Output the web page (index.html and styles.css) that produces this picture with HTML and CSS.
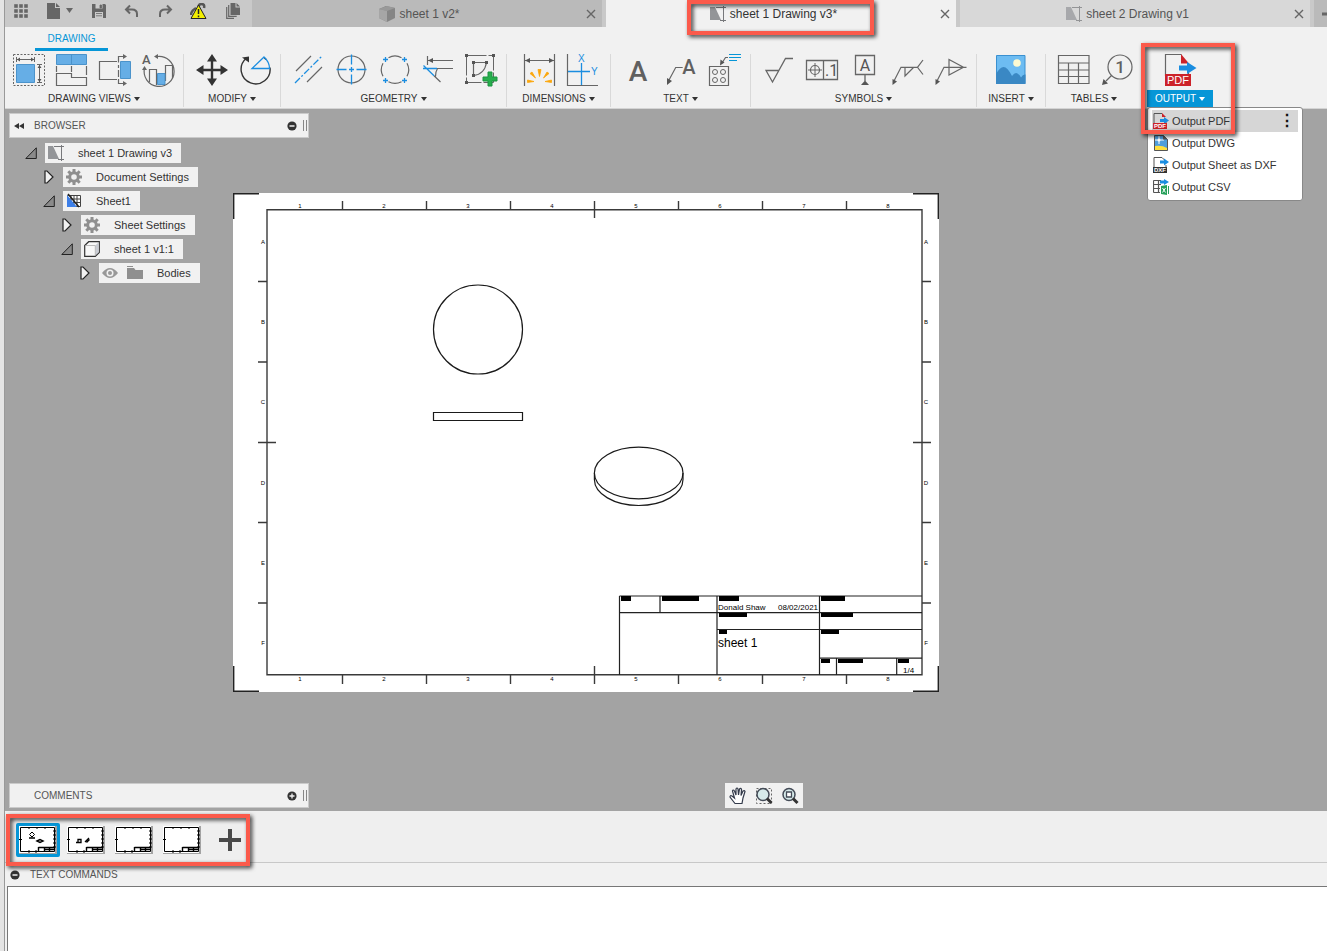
FILE: index.html
```html
<!DOCTYPE html>
<html lang="en">
<head>
    <meta charset="UTF-8">
    <meta name="viewport" content="width=device-width, initial-scale=1.0">
    <title>sheet 1 Drawing v3*</title>
    <link rel="stylesheet" href="styles.css">
</head>
<body>
    <!-- Shared icons -->
    <svg class="defs" aria-hidden="true">
        <symbol id="i-drawing" viewBox="0 0 16 16">
            <path d="M0 1h5l6 13H0z" fill="#939598"/>
            <path d="M6 1.500h10M13.500 0v16M10 14.500h6" fill="none" stroke="#77787b"/>
        </symbol>
        <symbol id="i-close" viewBox="0 0 10 10">
            <path d="M1 1l8 8M9 1L1 9" fill="none" stroke="#666" stroke-width="1.400"/>
        </symbol>
        <symbol id="i-gear" viewBox="0 0 16 16">
            <circle cx="8" cy="8" r="4.300" fill="none" stroke="#8f8f8f" stroke-width="3"/>
            <path d="M8 0v3M8 13v3M0 8h3M13 8h3M2.300 2.300l2.200 2.200M11.500 11.500l2.200 2.200M2.300 13.700l2.200-2.200M11.500 4.500l2.200-2.200" stroke="#8f8f8f" stroke-width="3"/>
        </symbol>
        <symbol id="i-open" viewBox="0 0 12 12">
            <path d="M11.300.8v10.700H.8z" fill="#8a8a8a" stroke="#222"/>
        </symbol>
        <symbol id="i-closed" viewBox="0 0 12 14">
            <path d="M2 1h2l6 6-6 6H2z" fill="#f1f1f1" stroke="#222" stroke-width="1.200"/>
        </symbol>
        <symbol id="i-minus" viewBox="0 0 10 10">
            <circle cx="5" cy="5" r="4.600" fill="#333"/>
            <path d="M2.500 5h5" stroke="#f1f1f1" stroke-width="1.500"/>
        </symbol>
        <symbol id="i-plus" viewBox="0 0 10 10">
            <circle cx="5" cy="5" r="4.600" fill="#333"/>
            <path d="M2.500 5h5M5 2.500v5" stroke="#f1f1f1" stroke-width="1.300"/>
        </symbol>
        <symbol id="i-thumb" viewBox="0 0 38 28">
            <path d="M0 0h38v28H0z" fill="#a3a3a3"/>
            <path d="M0 0h36v27H0z" fill="#fff"/>
            <path d="M1.500 1.500h34v24h-34z" fill="#fff" stroke="#000"/>
            <path d="M10 1v2M18 1v2M26 1v2M10 24v3M17 24v3M34 5h3M34 9h3M34 13h3M34 17h3M34 21h3M0 13.500h3" fill="none" stroke="#000"/>
            <path d="M19.500 21.500H35M19.500 21v4M25.500 22v3M30.500 21v4M25 23.500h10" fill="none" stroke="#000" stroke-width="1.400"/>
        </symbol>
    </svg>

    <div class="app">
        <header class="title-bar">
            <div class="quick-bar">
                <button class="icon-btn" aria-label="Data panel"><svg width="16" height="16"><path d="M1 1h4v4H1zM6 1h4v4H6zM11 1h4v4h-4zM1 6h4v4H1zM6 6h4v4H6zM11 6h4v4h-4zM1 11h4v4H1zM6 11h4v4H6zM11 11h4v4h-4z" fill="#666" stroke="#cbcbcb" stroke-width=".4"/></svg></button>
                <button class="icon-btn" aria-label="File"><svg width="28" height="16"><path d="M1 0h8v5h5v11H1zM10 0l4 4h-4z" fill="#666"/><path d="M20 5h7l-3.500 5z" fill="#666"/></svg></button>
                <button class="icon-btn" aria-label="Save"><svg width="16" height="16"><path d="M1 1h13l1 1v13H1z" fill="#666"/><path d="M4.500 1h7v4.500h-7zM4 9h8v6H4z" fill="#cbcbcb"/><path d="M9 2h1.500v3H9zM5 10.500h6M5 12.800h6" fill="#666" stroke="#666" stroke-width=".8"/></svg></button>
                <button class="icon-btn" aria-label="Undo"><svg width="16" height="16"><path d="M2 6.500h6q5 0 5 4.500v3M6 2.500l-4 4 4 4" fill="none" stroke="#666" stroke-width="2"/></svg></button>
                <button class="icon-btn" aria-label="Redo"><svg width="16" height="16"><path d="M14 6.500H8q-5 0-5 4.500v3M10 2.500l4 4-4 4" fill="none" stroke="#666" stroke-width="2"/></svg></button>
                <button class="icon-btn" aria-label="Warnings"><svg width="18" height="16"><path d="M1 12q0-4 5-7M9 5q-1-4 2.500-4T14 5" fill="none" stroke="#555" stroke-width="2.500"/><path d="M8.500 2l7.500 13.500H1z" fill="#f2ee00" stroke="#222"/><path d="M8.500 6v5M8.500 12.500v1.700" stroke="#222" stroke-width="1.500"/></svg></button>
                <button class="icon-btn" aria-label="Versions"><svg width="16" height="16"><path d="M1.700 4v11.300H9M3.700 2v11.300h8" fill="none" stroke="#666" stroke-width="1.200"/><path d="M5.500 0h5v4.500H15V12H5.500zM11.500 0L15 3.500h-3.500z" fill="#666"/></svg></button>
            </div>
            <nav class="doc-tabs">
                <div class="doc-tab">
                    <a href="#" class="doc-title"><span class="doc-name"><svg width="16" height="16"><path d="M0 3l7-3 9 2v10l-8 4-8-4z" fill="#858585"/><path d="M0 3l8 2 8-3-8-2z" fill="#999"/><path d="M0 3l8 2v11l-8-4z" fill="#a6a6a6"/></svg>sheet 1 v2*</span></a>
                    <button class="icon-btn doc-close" aria-label="Close"><svg width="10" height="10"><use href="#i-close"/></svg></button>
                </div>
                <div class="doc-tab active">
                    <a href="#" class="doc-title"><span class="doc-name"><svg width="16" height="16"><use href="#i-drawing"/></svg>sheet 1 Drawing v3*<span class="callout callout-tab"></span></span></a>
                    <button class="icon-btn doc-close" aria-label="Close"><svg width="10" height="10"><use href="#i-close"/></svg></button>
                </div>
                <div class="doc-tab light">
                    <a href="#" class="doc-title"><span class="doc-name"><svg width="16" height="16" opacity=".7"><use href="#i-drawing"/></svg>sheet 2 Drawing v1</span></a>
                    <button class="icon-btn doc-close" aria-label="Close"><svg width="10" height="10"><use href="#i-close"/></svg></button>
                </div>
            </nav>
            <button class="icon-btn new-tab" aria-label="New tab"><svg width="6" height="10"><path d="M1 5h5" stroke="#666" stroke-width="3"/></svg></button>
        </header>

        <section class="ribbon">
            <a href="#" class="ribbon-tab">DRAWING</a>
            <div class="groups">
                <div class="group first">
                    <div class="tools">
                        <button class="icon-btn" aria-label="Base view"><svg class="tool"><path d="M.5.5h31v31H.5z" fill="none" stroke="#666" stroke-dasharray="2 1.500"/><path d="M3.500 10.500h18v18h-18z" fill="#66aee6" stroke="#4b93cb"/><path d="M3.500 3v5M21.500 3v5M4 5.500h17M24 10.500h5M24 28.500h5M26.500 11v17" fill="none" stroke="#666"/><path d="M4 5.500l3-2v4zM21 5.500l-3-2v4zM26.500 11l-2 3h4zM26.500 28l-2-3h4z" fill="#555"/></svg></button>
                        <button class="icon-btn" aria-label="Projected view"><svg class="tool"><path d="M.5.5h30v10H.5zM15.500.5v10" fill="#66aee6" stroke="#4b93cb"/><path d="M.5 12v6M15.500 12v6M30.500 12v9M.5 19.500h15v4h15v8H.5zM16 18.500h0" fill="none" stroke="#666" stroke-width="1.200"/></svg></button>
                        <button class="icon-btn" aria-label="Section view"><svg class="tool"><path d="M18 7.500H.5v18H18M26 2.500h-6.500v6M19.500 11v3M19.500 16v7M19.500 25v4.500H26" fill="none" stroke="#666" stroke-width="1.200"/><path d="M21.500 7.500h10v17h-10z" fill="#66aee6" stroke="#4b93cb"/><path d="M28 2.500L24 0v5zM28 29.500L24 27v5z" fill="#666"/></svg></button>
                        <button class="icon-btn" aria-label="Detail view"><svg class="tool"><path d="M7.500 28V15.500h7V31M23.500 27V11.500h7V24" fill="#f1f1f1" stroke="#666" stroke-width="1.200"/><path d="M15.500 19.500h7.500v11h-7.500z" fill="#66aee6" stroke="#4b93cb"/><path d="M2.500 14a15 15 0 1 0 13-11.500" fill="none" stroke="#666" stroke-width="1.200"/><path d="M12 2.500l4-2.500v5zM2.500 12l-2.500 4h5z" fill="#666"/><text x="0" y="10" class="glyph-b" font-size="13">A</text></svg></button>
                    </div>
                    <button class="group-label">DRAWING VIEWS<i class="caret"></i></button>
                </div>
                <div class="group">
                    <div class="tools">
                        <button class="icon-btn" aria-label="Move"><svg class="tool"><path d="M16 4v24M4 16h24" stroke="#333" stroke-width="2.400"/><path d="M16 0l-5 7.500h10zM16 32l-5-7.500h10zM0 16l7.500-5v10zM32 16l-7.500-5v10z" fill="#333"/></svg></button>
                        <button class="icon-btn" aria-label="Rotate"><svg class="tool"><path d="M7 4.500a14.500 14.500 0 1 0 24 9M25 3.500a14 14 0 0 1 2 2" fill="none" stroke="#333" stroke-width="1.400"/><path d="M3 3.500l7-1 0 6z" fill="#333"/><path d="M25 3L13 14.500h17.500Q30.500 8 25 3z" fill="none" stroke="#1a8de0" stroke-width="1.300"/></svg></button>
                    </div>
                    <button class="group-label">MODIFY<i class="caret"></i></button>
                </div>
                <div class="group">
                    <div class="tools">
                        <button class="icon-btn" aria-label="Centerline"><svg class="tool"><path d="M3 17L18 2M14 28l15-15" stroke="#666" stroke-width="1.200"/><path d="M2 29L29 2" stroke="#1a8de0" stroke-width="1.300" stroke-dasharray="7 2 2 2"/></svg></button>
                        <button class="icon-btn" aria-label="Center mark"><svg class="tool"><circle cx="15.500" cy="15.500" r="13.500" fill="none" stroke="#666" stroke-width="1.200"/><path d="M.5 15.500h10M13 15.500h5M20.500 15.500h10M15.500.5v10M15.500 13v5M15.500 20.500v10" stroke="#1a8de0" stroke-width="1.300"/></svg></button>
                        <button class="icon-btn" aria-label="Center mark pattern"><svg class="tool"><path d="M9.500 3.700a13.700 13.700 0 0 1 13 0M28 9.200a13.700 13.700 0 0 1 0 13M22.500 27.700a13.700 13.700 0 0 1-13 0M4 22.200a13.700 13.700 0 0 1 0-13" fill="none" stroke="#666" stroke-width="1.200"/><path d="M4 5.500h5M6.500 3v5M23 5.500h5M25.500 3v5M4 26.500h5M6.500 24v5M23 26.500h5M25.500 24v5" stroke="#1a8de0" stroke-width="1.300"/></svg></button>
                        <button class="icon-btn" aria-label="Edge extension"><svg class="tool"><path d="M5.500 2v9M6 6.500h25M15 14.500h16M12 21.700l6.500 6.300M15.500 14.500q-2 3-2 8" fill="none" stroke="#666" stroke-width="1.200"/><path d="M6 6.500l5-2.500v5z" fill="#555"/><path d="M1 14.500h14M1.500 11.500L12 21.700" stroke="#1a8de0" stroke-width="1.300"/></svg></button>
                        <button class="icon-btn" aria-label="Create sketch"><svg class="tool"><path d="M1.500 1.500h27v27h-27z" fill="none" stroke="#666" stroke-dasharray="20 2"/><path d="M8.500 8.500v13q11-1 13-13z" fill="none" stroke="#666" stroke-width="1.200"/><path d="M0 0h3v3H0zM27 0h3v3h-3zM0 27h3v3H0zM7 7h3v3H7zM20 7h3v3h-3zM7 20h3v3H7z" fill="#555"/><path d="M23 18h4v5h5v4h-5v5h-4v-5h-5v-4h5z" fill="#27ae4c" stroke="#1b9440"/></svg></button>
                    </div>
                    <button class="group-label">GEOMETRY<i class="caret"></i></button>
                </div>
                <div class="group dimensions">
                    <div class="tools">
                        <button class="icon-btn" aria-label="Dimension"><svg class="tool"><path d="M1.500 0v32M31.500 0v32M2 6.500h29" stroke="#666" stroke-width="1.200"/><path d="M2 6.500L7 4v5zM31 6.500L26 4v5z" fill="#555"/><path d="M16.500 22.500l-1.500-7h3zM12.500 24L7 19.500l2-1.500zM20.500 24l5.500-4.500-2-1.500zM11 27.500l-6.500 1v-2.500zM22 27.500l6.500 1v-2.500z" fill="#fba60a" stroke="#fba60a" stroke-width=".8"/></svg></button>
                        <button class="icon-btn" aria-label="Ordinate dimension"><svg class="tool"><path d="M1.500 0v31.500H32" fill="none" stroke="#666" stroke-width="1.200"/><path d="M2 17.500h22M15.500 9v22" stroke="#1a8de0" stroke-width="1.300"/><text x="12" y="8" class="glyph-blue">X</text><text x="25" y="21" class="glyph-blue">Y</text></svg></button>
                    </div>
                    <button class="group-label">DIMENSIONS<i class="caret"></i></button>
                </div>
                <div class="group">
                    <div class="tools">
                        <button class="icon-btn" aria-label="Text"><svg class="tool"><text x="15" y="27" text-anchor="middle" class="glyph-b" font-size="28">A</text></svg></button>
                        <button class="icon-btn" aria-label="Leader text"><svg class="tool"><path d="M3 26l6.700-12.500h7" fill="none" stroke="#666" stroke-width="1.200"/><path d="M1 31v-7l5 3z" fill="#555"/><text x="23" y="20" text-anchor="middle" class="glyph-b" font-size="20">A</text></svg></button>
                        <button class="icon-btn" aria-label="Bend note"><svg class="tool"><path d="M.5 12.500h19v19H.5zM13 9l3.500-5.500H19" fill="none" stroke="#666" stroke-width="1.200"/><path d="M11 11.500l.5-6 4 3z" fill="#555"/><g fill="none" stroke="#666"><circle cx="6" cy="18" r="2.500"/><circle cx="14" cy="18" r="2.500"/><circle cx="6" cy="26" r="2.500"/><circle cx="14" cy="26" r="2.500"/></g><path d="M20 .5h12M20 3.500h12M20 6.500h8" stroke="#0696d7" stroke-width="1.200"/></svg></button>
                    </div>
                    <button class="group-label">TEXT<i class="caret"></i></button>
                </div>
                <div class="group">
                    <div class="tools">
                        <button class="icon-btn" aria-label="Surface texture"><svg class="tool"><path d="M16 16.500H3L9.500 28 22.500 4.500H30" fill="none" stroke="#666" stroke-width="1.300"/></svg></button>
                        <button class="icon-btn" aria-label="Feature control frame"><svg class="tool"><path d="M.5 6.500h31v19H.5zM17.500 6.500v19" fill="none" stroke="#666" stroke-width="1.300"/><circle cx="9" cy="16" r="4.500" fill="none" stroke="#666" stroke-width="1.200"/><path d="M2 16h14M9 9v14" stroke="#666"/><text x="19" y="22" class="glyph" font-size="16">.1</text></svg></button>
                        <button class="icon-btn" aria-label="Datum identifier"><svg class="tool"><path d="M6.500 1.500h19v19h-19zM16 20.500V27" fill="none" stroke="#666" stroke-width="1.300"/><path d="M16 26.500l-4 4.500h8z" fill="#555"/><text x="16" y="17" text-anchor="middle" class="glyph" font-size="16">A</text></svg></button>
                        <button class="icon-btn" aria-label="Welding"><svg class="tool"><path d="M2 27L9 13.300h16.500M13 13.300V22l8.500-8.500M31 6l-5.500 7.300L31 20.500" fill="none" stroke="#666" stroke-width="1.200"/><path d="M.5 31v-6l4.500 2.500z" fill="#555"/></svg></button>
                        <button class="icon-btn" aria-label="Taper and slope"><svg class="tool"><path d="M2 27L9 13.300h22.500M14 5.500v15.500l14.500-7.700z" fill="none" stroke="#666" stroke-width="1.200"/><path d="M.5 31v-6l4.500 2.500z" fill="#555"/></svg></button>
                    </div>
                    <button class="group-label">SYMBOLS<i class="caret"></i></button>
                </div>
                <div class="group insert">
                    <div class="tools single">
                        <button class="icon-btn" aria-label="Insert image"><svg class="tool"><path d="M1.500 1.500h28.500v28H1.500z" fill="#6dbcf2" stroke="#3a90d0"/><path d="M1 20q4-7 7.500-7 4 0 8.500 9 3-4 5.500-2.500t3.500 4q2-3.500 4.500-3v9.500H1z" fill="#3a88c4"/><circle cx="22" cy="9" r="3.800" fill="#fcfad2"/></svg></button>
                    </div>
                    <button class="group-label">INSERT<i class="caret"></i></button>
                </div>
                <div class="group last">
                    <div class="tools">
                        <button class="icon-btn" aria-label="Table"><svg class="tool"><path d="M.5 1.500h30.500v28H.5zM.5 9h30.500M.5 16h30.500M.5 22.500h30.500M10.500 9v20M20.500 9v20" fill="none" stroke="#666" stroke-width="1.200"/></svg></button>
                        <button class="icon-btn" aria-label="Balloon"><svg class="tool"><circle cx="19" cy="13" r="12" fill="none" stroke="#666" stroke-width="1.200"/><path d="M10.500 21.500L5 27" stroke="#666" stroke-width="1.200"/><path d="M1 31l1.500-6 4.500 4.500z" fill="#555"/><text x="19" y="19" text-anchor="middle" class="glyph-b" font-size="17">1</text></svg></button>
                    </div>
                    <button class="group-label">TABLES<i class="caret"></i></button>
                </div>
                <div class="group output">
                    <div class="tools single">
                        <button class="icon-btn" aria-label="Output PDF"><svg class="tool"><path d="M1.500 22V.5h16M24.500 9v12" fill="none" stroke="#666" stroke-width="1.200"/><path d="M17 0v9.500h8z" fill="#cc2229"/><path d="M15 11.500h8V8l9.500 6-9.500 6v-3.500h-8z" fill="#1a8de0"/><path d="M1 20h26v12H1z" fill="#cc2229"/><text x="14" y="30" text-anchor="middle" class="glyph-white">PDF</text></svg></button>
                    </div>
                    <button class="group-label selected">OUTPUT<i class="caret"></i></button>
                    <ul class="menu">
                        <li><button class="menu-item hover"><svg width="16" height="16"><path d="M1 11V.5h8M13 8v2" fill="none" stroke="#555"/><path d="M9 0v4h4z" fill="#cc2229"/><path d="M7 6h4V4l5 3.500L11 11V9H7z" fill="#1a8de0"/><path d="M0 10h14v6H0z" fill="#cc2229"/><text x="7" y="15" text-anchor="middle" class="glyph-tiny">PDF</text></svg>Output PDF<span class="more">⋮</span></button></li>
                        <li><button class="menu-item"><svg width="16" height="16"><path d="M1.500.5h9l4 4v11h-13z" fill="#4f9ddb" stroke="#555"/><path d="M2 11q7-1 12 2v2H2z" fill="#ffdf3e"/><path d="M6 1v8M2 5h9" stroke="#fff"/><circle cx="6" cy="5" r="1.500" fill="#fff"/><path d="M10 0v4.500h4.500z" fill="#555"/></svg>Output DWG</button></li>
                        <li><button class="menu-item"><svg width="16" height="16"><path d="M1 11V.5h8l3 3M13 8v2" fill="none" stroke="#555"/><path d="M7 3.500h4V1.500L16 5l-5 3.500V6.500H7z" fill="#1a8de0"/><path d="M0 10h14v6H0z" fill="#333"/><text x="7" y="15" text-anchor="middle" class="glyph-tiny">DXF</text></svg>Output Sheet as DXF</button></li>
                        <li><button class="menu-item"><svg width="16" height="16"><path d="M.5 1.500H8M.5 5.500H8M.5 9.500H7M.5 13.500H7M.5 1.500v12M5.500 1.500v12" fill="none" stroke="#555" stroke-width="1.200"/><path d="M7 1.500h4V0l5 3-5 3V4.500H7z" fill="#1a8de0"/><path d="M8 7l6-1v10l-6-1z" fill="#26a05a"/><path d="M9.500 9l3 4.500M12.500 9l-3 4.500" stroke="#fff"/><path d="M15.500 7v8" stroke="#26a05a"/></svg>Output CSV</button></li>
                    </ul>
                    <span class="callout callout-output"></span>
                </div>
            </div>
        </section>

        <main class="canvas">
            <!-- Drawing sheet -->
            <svg class="sheet" viewBox="233 193 706 499">
                <path d="M233 193h706v499H233z" fill="#fff"/>
                <g fill="none" stroke="#3a3a3a" stroke-width="1.400">
                    <path d="M267 209.700h655v465H267z"/>
                    <path d="M342.500 201v8M426.500 201v8M510.500 201v8M594.500 201v17M678.500 201v8M762.500 201v8M846.500 201v8"/>
                    <path d="M342.500 675v9M426.500 675v9M510.500 675v9M594.500 666v18M678.500 675v9M762.500 675v9M846.500 675v9"/>
                    <path d="M258 281.500h9M258 362h9M258 442.500h18M258 522.500h9M258 603h9"/>
                    <path d="M922 281.500h9M922 362h9M913 442.500h18M922 522.500h9M922 603h9"/>
                </g>
                <path d="M233.700 219v-25.300H259M913 193.700h25.300V219M233.700 666v25.300H259M913 691.300h25.300V666" fill="none" stroke="#222" stroke-width="1.400"/>
                <g class="zone">
                    <text x="300" y="208">1</text><text x="384" y="208">2</text><text x="468" y="208">3</text><text x="552" y="208">4</text><text x="636" y="208">5</text><text x="720" y="208">6</text><text x="804" y="208">7</text><text x="888" y="208">8</text>
                    <text x="300" y="681">1</text><text x="384" y="681">2</text><text x="468" y="681">3</text><text x="552" y="681">4</text><text x="636" y="681">5</text><text x="720" y="681">6</text><text x="804" y="681">7</text><text x="888" y="681">8</text>
                    <text x="263" y="244">A</text><text x="263" y="324">B</text><text x="263" y="404">C</text><text x="263" y="485">D</text><text x="263" y="565">E</text><text x="263" y="645">F</text>
                    <text x="926" y="244">A</text><text x="926" y="324">B</text><text x="926" y="404">C</text><text x="926" y="485">D</text><text x="926" y="565">E</text><text x="926" y="645">F</text>
                </g>
                <!-- Views -->
                <g fill="none" stroke="#1a1a1a" stroke-width="1.200">
                    <circle cx="478" cy="329.500" r="44.500"/>
                    <path d="M433.500 412.500h89v8h-89z"/>
                    <ellipse cx="638.700" cy="473" rx="44.300" ry="25.800"/>
                    <path d="M594.400 473v6.500a44.300 26 0 0 0 88.600 0V473"/>
                </g>
                <!-- Title block -->
                <path d="M619.500 596H922M619.500 612.700H922M717 629.500h205M819.500 658.200H922M619.500 596v79M660 596v17M717 596v79M819.500 596v79M836.500 658v17M896.700 658v17" fill="none" stroke="#222" stroke-width="1.200"/>
                <path d="M621 596h10v5h-10zM662 596h37v5h-37zM719 596h20v5h-20zM821 596h24v5h-24zM719 613h28v4h-28zM821 613h32v4h-32zM719 630h8v4h-8zM821 630h18v4h-18zM821 659h9v4h-9zM838 659h25v4h-25zM898 659h11v4h-11z"/>
                <g class="title-text">
                    <text x="718" y="610">Donald Shaw</text>
                    <text x="778" y="610">08/02/2021</text>
                    <text x="903" y="673">1/4</text>
                    <text x="718" y="647" class="sheet-name">sheet 1</text>
                </g>
            </svg>

            <aside class="browser">
                <div class="panel">
                    <button class="icon-btn panel-fold" aria-label="Collapse"><svg width="10" height="6"><path d="M5 0v6L0 3zM10 0v6L5 3z" fill="#333"/></svg></button>
                    <span class="panel-name">BROWSER</span>
                    <button class="icon-btn" aria-label="Hide"><svg width="10" height="10"><use href="#i-minus"/></svg></button>
                    <span class="grip"></span>
                </div>
                <ul class="tree">
                    <li><svg class="arrow"><use href="#i-open" width="12" height="12" y="1"/></svg><span class="node"><svg class="node-icon"><use href="#i-drawing"/></svg>sheet 1 Drawing v3</span></li>
                    <li class="level-1"><svg class="arrow"><use href="#i-closed" width="12" height="14"/></svg><span class="node"><svg class="node-icon"><use href="#i-gear"/></svg>Document Settings</span></li>
                    <li class="level-1"><svg class="arrow"><use href="#i-open" width="12" height="12" y="1"/></svg><span class="node"><svg class="node-icon"><path d="M1.500 2.500h13v11h-13z" fill="#fff" stroke="#444"/><path d="M5 3v10M8 3v10M11 3v10M2 6h12M2 9.500h12" stroke="#444"/><path d="M1 2l10 12H1z" fill="#3d7fe8"/><path d="M2 1l11 13" stroke="#222" stroke-width="1.500"/></svg>Sheet1</span></li>
                    <li class="level-2"><svg class="arrow"><use href="#i-closed" width="12" height="14"/></svg><span class="node"><svg class="node-icon"><use href="#i-gear"/></svg>Sheet Settings</span></li>
                    <li class="level-2"><svg class="arrow"><use href="#i-open" width="12" height="12" y="1"/></svg><span class="node"><svg class="node-icon"><path d="M.7 4.500l4-3.800h10.600v10.800l-4 3.800H.7z" fill="#f8f8f8" stroke="#333" stroke-width="1.200"/><path d="M11.300 4.500l3.400-3.200v10l-3.400 3.200z" fill="#c9ccd3"/><path d="M1.500 4.500h9.800v10" fill="none" stroke="#bbb"/></svg>sheet 1 v1:1</span></li>
                    <li class="level-3"><svg class="arrow"><use href="#i-closed" width="12" height="14"/></svg><span class="node node-body"><svg class="node-icon"><path d="M0 8q8-10 16 0-8 10-16 0z" fill="#999"/><circle cx="8" cy="8" r="3.500" fill="#f1f1f1"/><circle cx="8" cy="8" r="2" fill="#999"/></svg><svg class="node-icon"><path d="M0 3h7l1.500 2H16v9H0zM0 1h6v1H0z" fill="#8f8f8f"/></svg>Bodies</span></li>
                </ul>
            </aside>

            <div class="canvas-foot">
                <div class="panel">
                    <span class="panel-name indent">COMMENTS</span>
                    <button class="icon-btn" aria-label="Show"><svg width="10" height="10"><use href="#i-plus"/></svg></button>
                    <span class="grip"></span>
                </div>
                <div class="view-bar">
                    <button class="icon-btn" aria-label="Pan"><svg width="18" height="18"><path d="M6 16.500L1 10q0-2 2-1l2.500 2L3.500 4q.5-2 2 0L7 8V2q1-2 2 0l.5 6 1-6q1.500-1.500 2 .5L12 8.500 14 4q1.500-1 2 .5L14 11l-1 5.500z" fill="#fff" stroke="#333a4a" stroke-width="1.200"/></svg></button>
                    <button class="icon-btn" aria-label="Zoom"><svg width="18" height="18"><path d="M1.500 1.500h15v15h-15z" fill="none" stroke="#666" stroke-dasharray="2 2"/><circle cx="8" cy="7.500" r="6" fill="#d6eaea" stroke="#444b57" stroke-width="1.500"/><path d="M12 11.500l4.500 4.500" stroke="#333" stroke-width="3"/></svg></button>
                    <button class="icon-btn" aria-label="Fit"><svg width="18" height="18"><circle cx="8" cy="7.500" r="6" fill="#d6eaea" stroke="#444b57" stroke-width="1.500"/><path d="M5.500 5h5v5h-5z" fill="#fff" stroke="#444b57" stroke-width="1.300"/><path d="M12 11.500l4.500 4.500" stroke="#333" stroke-width="3"/></svg></button>
                </div>
            </div>
        </main>

        <section class="sheet-strip">
            <button class="thumb current" aria-label="Sheet 1"><svg width="38" height="28"><use href="#i-thumb"/><path d="M13 6l2.500 2.500L13 11l-2.500-2.500z" fill="none" stroke="#000"/><path d="M10 12h6M18 15l3-1.500 3 1.500-3 1.500z" fill="none" stroke="#000" stroke-width="1.500"/></svg></button>
            <button class="thumb" aria-label="Sheet 2"><svg width="38" height="28"><use href="#i-thumb"/><path d="M9 16.500h3M11 13.500h3v3h-3zM18 16l4-4M19.500 16.500l3-3" fill="none" stroke="#000" stroke-width="1.300"/></svg></button>
            <button class="thumb" aria-label="Sheet 3"><svg width="38" height="28"><use href="#i-thumb"/></svg></button>
            <button class="thumb" aria-label="Sheet 4"><svg width="38" height="28"><use href="#i-thumb"/></svg></button>
            <button class="thumb" aria-label="Add sheet"><svg width="22" height="22"><path d="M11 0v22M0 11h22" stroke="#4a4a4a" stroke-width="4"/></svg></button>
            <span class="callout callout-strip"></span>
        </section>

        <section class="commands">
            <div class="commands-head">
                <button class="icon-btn" aria-label="Hide text commands"><svg width="10" height="10"><use href="#i-minus"/></svg></button>
                <label for="command-text">TEXT COMMANDS</label>
            </div>
            <textarea id="command-text"></textarea>
        </section>
    </div>
</body>
</html>
```
FILE: styles.css
```css
* {
    margin: 0;
    padding: 0;
    box-sizing: border-box;
}

body {
    font-family: "Liberation Sans", Arial, sans-serif;
    font-size: 11px;
    color: #333;
    background: #e4e4e4;
}

button {
    font: inherit;
    color: inherit;
    border: none;
    background: none;
    cursor: pointer;
}

a {
    color: inherit;
    text-decoration: none;
}

ul {
    list-style: none;
}

svg {
    display: block;
    flex: none;
}

.defs {
    position: absolute;
    width: 0;
    height: 0;
}

.app {
    display: flex;
    flex-direction: column;
    height: 100vh;
    margin-left: 4px;
    border-left: 1px solid #999;
}

.icon-btn {
    display: flex;
    align-items: center;
    justify-content: center;
    flex: none;
}

/* Title bar */
.title-bar {
    display: flex;
    height: 27px;
    background: #c9c9c9;
}

.quick-bar {
    display: flex;
    align-items: flex-start;
    gap: 17px;
    width: 247px;
    padding: 3px 0 0 8px;
}

.doc-tabs {
    display: flex;
    flex: 1;
    gap: 4px;
    padding-right: 4px;
}

.doc-tab {
    display: flex;
    flex: 1;
    background: #bababa;
    color: #555;
    font-size: 12px;
}

.doc-tab.active {
    background: #f1f1f1;
    color: #333;
}

.doc-tab.light {
    background: #d8d8d8;
}

.doc-title {
    display: flex;
    flex: 1;
    align-items: center;
    justify-content: center;
    padding-left: 7px;
}

.doc-name {
    position: relative;
    display: flex;
    align-items: center;
    gap: 4px;
    line-height: 16px;
}

.doc-close {
    width: 22px;
}

.new-tab {
    width: 13px;
    background: #bababa;
    justify-content: flex-end;
}

/* Ribbon */
.ribbon {
    background: #f1f1f1;
    border-bottom: 1px solid #d4d4d4;
}

.ribbon-tab {
    display: block;
    width: 73px;
    height: 24px;
    margin-left: 30px;
    border-bottom: 3px solid #0696d7;
    color: #0696d7;
    font-size: 10px;
    line-height: 24px;
    text-align: center;
}

.groups {
    display: flex;
    padding: 3px 0 1px;
}

.group {
    position: relative;
    display: flex;
    flex-direction: column;
    align-items: center;
    justify-content: space-between;
    height: 53px;
    border-right: 1px solid #d9d9d9;
}

.group.last,
.group.output {
    border-right: none;
}

.group.output {
    margin-left: 5px;
}

.dimensions {
    min-width: 104px;
}

.insert {
    min-width: 69px;
}

.tools {
    display: flex;
    gap: 11px;
    padding: 0 9px 0 12px;
}

.first .tools {
    padding-left: 8px;
}

.tools.single {
    padding: 0;
}

.tool {
    width: 32px;
    height: 32px;
    overflow: visible;
}

.group-label {
    display: flex;
    align-items: center;
    gap: 3px;
    height: 17px;
    padding: 0 8px;
    font-size: 10px;
    white-space: nowrap;
}

.group-label.selected {
    background: #0696d7;
    color: #fff;
}

.caret {
    border: 3px solid transparent;
    border-top: 4px solid currentColor;
    border-bottom: none;
}

.glyph {
    fill: #555;
    font-family: Roboto, sans-serif;
}

.glyph-b {
    fill: #606060;
    font-family: Roboto, sans-serif;
    font-weight: 500;
}

.glyph-blue {
    fill: #1a8de0;
    font-size: 10px;
}

.glyph-white {
    fill: #fff;
    font-size: 11px;
}

.glyph-tiny {
    fill: #fff;
    font-size: 6px;
    font-weight: bold;
}

.menu {
    position: absolute;
    top: 100%;
    left: 0;
    z-index: 5;
    width: 156px;
    padding: 2px 4px;
    background: #fff;
    border: 1px solid #888;
    border-radius: 3px;
}

.menu-item {
    display: flex;
    align-items: center;
    gap: 3px;
    width: 100%;
    height: 22px;
    padding-left: 1px;
    text-align: left;
}

.menu-item.hover {
    background: #d6d6d6;
}

.more {
    margin-left: auto;
    padding-right: 3px;
    color: #111;
    font-size: 16px;
    font-weight: bold;
    line-height: 16px;
}

/* Red callouts */
.callout {
    position: absolute;
    z-index: 10;
    border: 4px solid #fb5a4b;
    filter: drop-shadow(2px 2px 2px rgba(0, 0, 0, 0.8));
    pointer-events: none;
}

.callout-tab {
    inset: -6px -37px -13px -23px;
}

.callout-output {
    inset: -11px -22px -27px -6px;
}

.callout-strip {
    top: 3px;
    left: 1px;
    width: 244px;
    height: 52px;
}

/* Canvas */
.canvas {
    position: relative;
    display: flex;
    flex: 1;
    flex-direction: column;
    justify-content: space-between;
    min-height: 0;
    padding: 4px 4px 3px;
    background: #a3a3a3;
}

.sheet {
    position: absolute;
    top: 84px;
    left: 228px;
    width: 706px;
    height: 499px;
}

.zone {
    font-size: 6px;
    text-anchor: middle;
}

.title-text {
    font-size: 8px;
}

.sheet-name {
    font-size: 12px;
}

.browser,
.canvas-foot {
    position: relative;
}

.panel {
    display: flex;
    align-items: center;
    width: 300px;
    height: 25px;
    padding: 0 1px 0 4px;
    background: #f1f1f1;
    border: 1px solid #cacaca;
    color: #555;
    font-size: 10px;
}

.panel-name {
    flex: 1;
    padding-left: 10px;
}

.panel-name.indent {
    padding-left: 20px;
}

.grip {
    width: 4px;
    height: 11px;
    margin-left: 6px;
    border: solid #888;
    border-width: 0 1px;
}

.tree {
    display: flex;
    flex-direction: column;
    gap: 4px;
    padding: 5px 0 0 16px;
}

.tree li {
    display: flex;
    align-items: center;
    gap: 8px;
}

.level-1 {
    padding-left: 18px;
}

.level-2 {
    padding-left: 36px;
}

.level-3 {
    padding-left: 54px;
}

.arrow {
    width: 12px;
    height: 14px;
}

.node {
    display: flex;
    align-items: center;
    gap: 14px;
    height: 20px;
    padding: 0 9px 0 3px;
    background: #f1f1f1;
}

.node-body {
    gap: 9px;
}

.node-icon {
    width: 16px;
    height: 16px;
}

.node-body .node-icon:nth-child(2) {
    margin-right: 5px;
}

.canvas-foot {
    display: flex;
    gap: 416px;
}

.view-bar {
    display: flex;
    height: 25px;
    background: #f1f1f1;
}

.view-bar .icon-btn {
    width: 26px;
}

/* Sheet strip */
.sheet-strip {
    position: relative;
    display: flex;
    align-items: center;
    gap: 4px;
    height: 52px;
    padding: 7px 11px 0;
    background: #efefef;
    border-bottom: 1px solid #c8c8c8;
}

.thumb {
    display: flex;
    align-items: center;
    justify-content: center;
    width: 44px;
    height: 34px;
    border: 3px solid transparent;
    border-radius: 2px;
}

.thumb.current {
    border-color: #0696d7;
}

/* Text commands */
.commands {
    display: flex;
    flex-direction: column;
    height: 88px;
    background: #f1f1f1;
}

.commands-head {
    display: flex;
    align-items: center;
    gap: 10px;
    height: 23px;
    padding-left: 5px;
    color: #555;
    font-size: 10px;
}

.commands textarea {
    flex: 1;
    margin-left: 2px;
    border: solid #777;
    border-width: 1px 0 0 1px;
    background: #fff;
    outline: none;
    resize: none;
}
```
